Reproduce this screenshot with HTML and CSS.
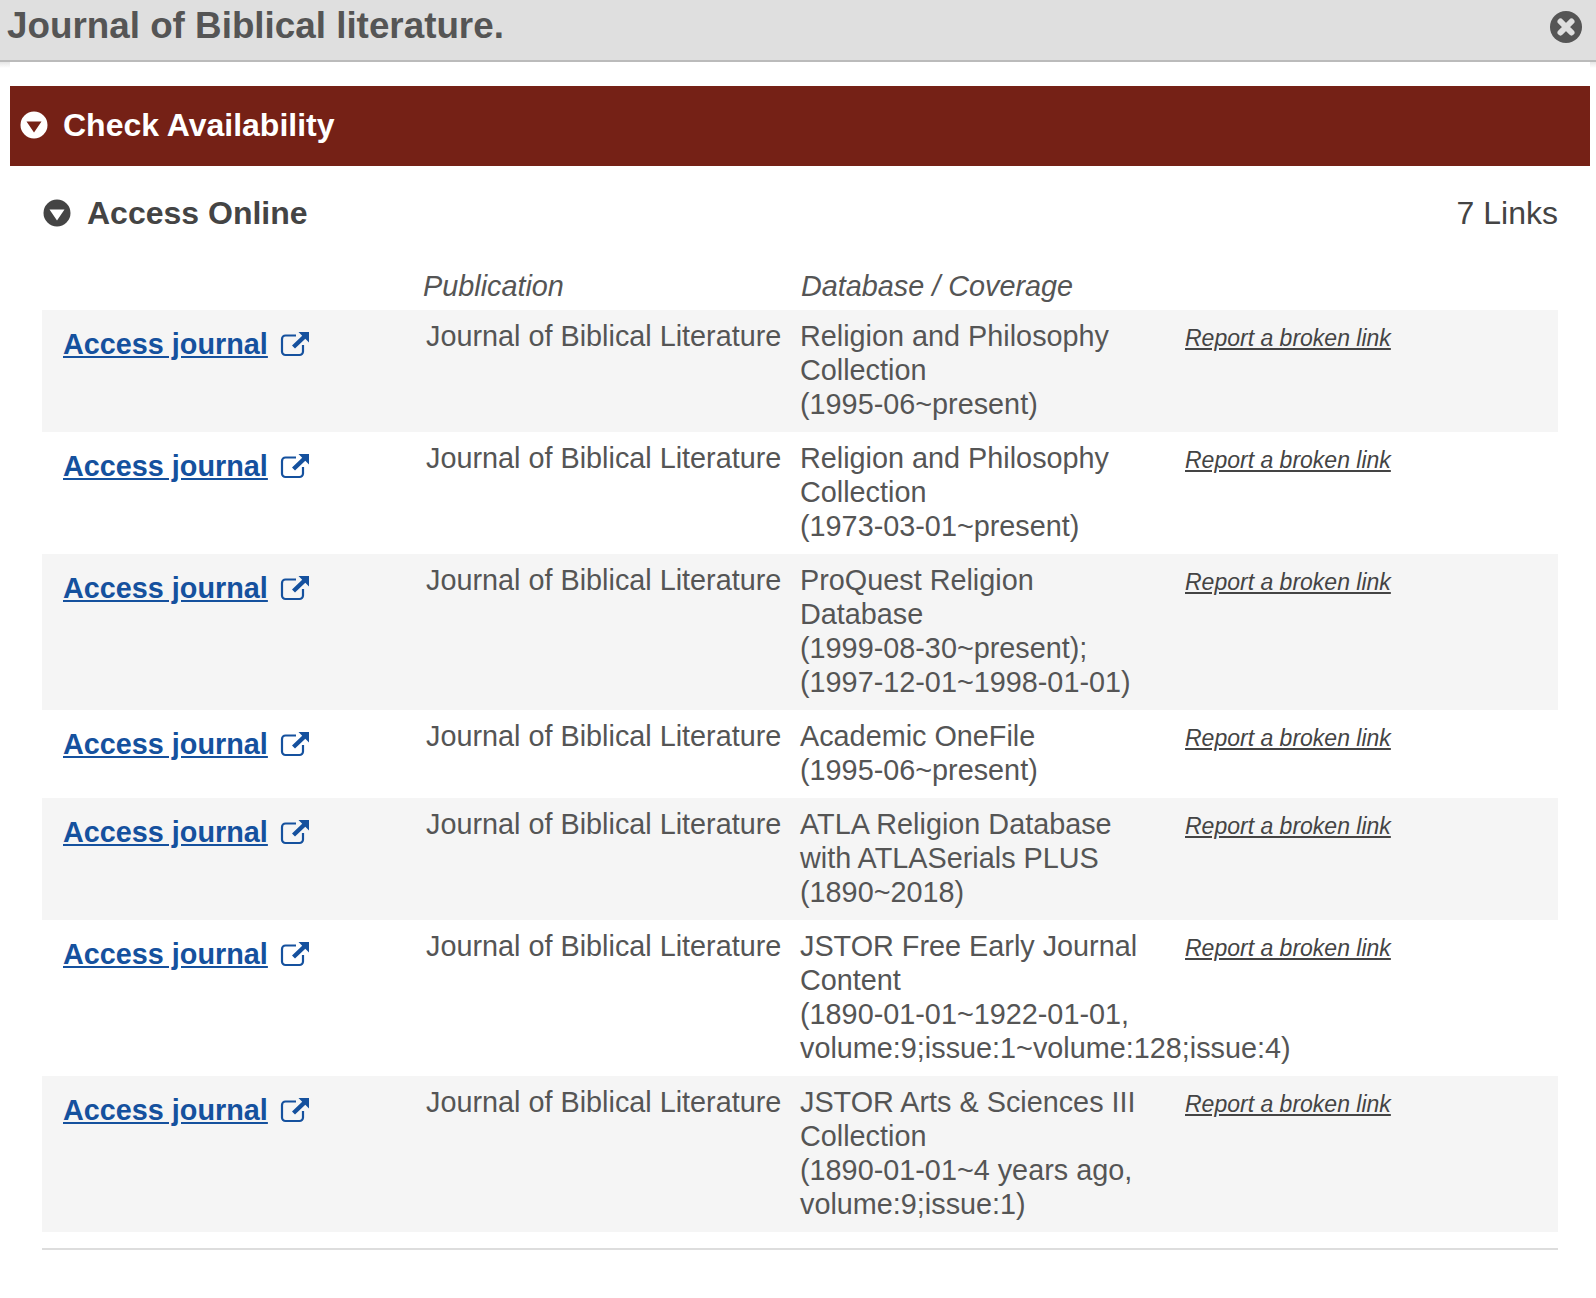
FILE: index.html
```html
<!DOCTYPE html>
<html lang="en">
<head>
<meta charset="utf-8">
<title>Journal of Biblical literature.</title>
<link rel="stylesheet" href="styles.css">
</head>
<body>
<svg class="defs" width="0" height="0" aria-hidden="true">
  <symbol id="ext" viewBox="0 0 30 26">
    <path d="M16 4.500H5.500a3.500 3.500 0 0 0-3.500 3.500V20.500a3.500 3.500 0 0 0 3.500 3.500H19.500a3.500 3.500 0 0 0 3.500-3.500V14" fill="none" stroke="currentColor" stroke-width="2.200"/>
    <path d="M18.500 1H29V11.500L25.300 7.800 15 17.500 12 14.500 22.200 4.700Z" fill="currentColor"/>
  </symbol>
  <symbol id="down" viewBox="0 0 28 28">
    <path fill-rule="evenodd" d="M14 .5a13.500 13.500 0 1 0 0 27 13.500 13.500 0 0 0 0-27ZM6.500 10.500H21.500L14 21.500Z" fill="currentColor"/>
  </symbol>
</svg>
<header class="topbar">
  <h1 class="title">Journal of Biblical literature.</h1>
  <svg class="close" viewBox="0 0 32 32" aria-label="Close">
    <circle cx="16" cy="16" r="16" fill="#555"/>
    <path d="M10.500 10.500 21.500 21.500M21.500 10.500 10.500 21.500" stroke="#dfdfdf" stroke-width="6" stroke-linecap="round"/>
  </svg>
</header>
<div class="shade"></div>
<main class="panel">
  <div class="avail"><svg class="chev"><use href="#down"/></svg><span>Check Availability</span></div>
  <section class="online">
    <div class="online-head">
      <h2 class="online-title"><svg class="chev"><use href="#down"/></svg>Access Online</h2>
      <span class="count">7 Links</span>
    </div>
    <div class="row heads">
      <span></span>
      <span class="hd hd-pub">Publication</span>
      <span class="hd hd-db">Database / Coverage</span>
    </div>

    <div class="row item">
      <div class="link-cell"><a class="access" href="#">Access journal</a><svg class="ext"><use href="#ext"/></svg></div>
      <div class="pub">Journal of Biblical Literature</div>
      <div class="db">Religion and Philosophy Collection<br>(1995-06~present)</div>
      <div class="report-cell"><a class="report" href="#">Report a broken link</a></div>
    </div>
    <div class="row item">
      <div class="link-cell"><a class="access" href="#">Access journal</a><svg class="ext"><use href="#ext"/></svg></div>
      <div class="pub">Journal of Biblical Literature</div>
      <div class="db">Religion and Philosophy Collection<br>(1973-03-01~present)</div>
      <div class="report-cell"><a class="report" href="#">Report a broken link</a></div>
    </div>
    <div class="row item">
      <div class="link-cell"><a class="access" href="#">Access journal</a><svg class="ext"><use href="#ext"/></svg></div>
      <div class="pub">Journal of Biblical Literature</div>
      <div class="db">ProQuest Religion Database<br>(1999-08-30~present);<br>(1997-12-01~1998-01-01)</div>
      <div class="report-cell"><a class="report" href="#">Report a broken link</a></div>
    </div>
    <div class="row item">
      <div class="link-cell"><a class="access" href="#">Access journal</a><svg class="ext"><use href="#ext"/></svg></div>
      <div class="pub">Journal of Biblical Literature</div>
      <div class="db">Academic OneFile<br>(1995-06~present)</div>
      <div class="report-cell"><a class="report" href="#">Report a broken link</a></div>
    </div>
    <div class="row item">
      <div class="link-cell"><a class="access" href="#">Access journal</a><svg class="ext"><use href="#ext"/></svg></div>
      <div class="pub">Journal of Biblical Literature</div>
      <div class="db">ATLA Religion Database with ATLASerials PLUS<br>(1890~2018)</div>
      <div class="report-cell"><a class="report" href="#">Report a broken link</a></div>
    </div>
    <div class="row item">
      <div class="link-cell"><a class="access" href="#">Access journal</a><svg class="ext"><use href="#ext"/></svg></div>
      <div class="pub">Journal of Biblical Literature</div>
      <div class="db">JSTOR Free Early Journal Content<br>(1890-01-01~1922-01-01, volume:9;issue:1~volume:128;issue:4)</div>
      <div class="report-cell"><a class="report" href="#">Report a broken link</a></div>
    </div>
    <div class="row item">
      <div class="link-cell"><a class="access" href="#">Access journal</a><svg class="ext"><use href="#ext"/></svg></div>
      <div class="pub">Journal of Biblical Literature</div>
      <div class="db">JSTOR Arts &amp; Sciences III Collection<br>(1890-01-01~4 years ago, volume:9;issue:1)</div>
      <div class="report-cell"><a class="report" href="#">Report a broken link</a></div>
    </div>
    <hr class="rule">
  </section>
</main>
</body>
</html>
```
FILE: styles.css
```css
* { box-sizing: border-box; }
html, body { margin: 0; padding: 0; background: #fff; }
body {
  font-family: "Liberation Sans", Arial, sans-serif;
  color: #555;
  overflow: hidden;
  height: 1298px;
}
.defs { display: block; height: 0; }
.topbar {
  height: 62px;
  background: #dfdfdf;
  border-bottom: 2px solid #bbb;
  display: flex;
  align-items: center;
  justify-content: space-between;
  padding: 0 14px 6px 7px;
}
.title { margin: 0 0 2px; font-size: 36.8px; font-weight: 700; color: #555; line-height: 50px; }
.close { width: 32px; height: 32px; display: block; }
.shade {
  height: 6px;
  background: linear-gradient(#e6e6e6, #fff);
  margin-bottom: -6px;
}
.panel { position: relative; background: #fff; margin: 0 6px 0 10px; padding-top: 24px; }
.avail {
  height: 80px;
  background: #752116;
  color: #fff;
  font-size: 32px;
  font-weight: 700;
  display: flex;
  align-items: center;
  gap: 15px;
  padding: 0 0 2px 10px;
}
.chev { width: 28px; height: 28px; display: block; flex: none; }
.avail .chev { color: #fff; }
.online { padding: 0 32px; }
.online-head {
  display: flex;
  align-items: center;
  justify-content: space-between;
  height: 94px;
}
.online-title {
  margin: 0;
  display: flex;
  align-items: center;
  gap: 16px;
  font-size: 32px;
  font-weight: 700;
  color: #444;
}
.online-title .chev { color: #444; margin-left: 1px; }
.count { font-size: 32px; color: #444; }
.row {
  display: grid;
  grid-template-columns: 370px 388px 385px 1fr;
  font-size: 28.8px;
  line-height: 34px;
}
.heads { height: 50px; align-items: start; }
.hd { font-style: italic; color: #555; padding-top: 9px; }
.hd-pub { margin-left: 11px; }
.hd-db { margin-left: 1px; }
.item { padding: 9px 0 11px; background: #fff; }
.item:nth-child(odd) { background: #f5f5f5; }
.link-cell { padding-left: 21px; display: flex; align-items: flex-start; padding-top: 9px; }
.pub { padding-left: 14px; white-space: nowrap; }
.db { padding-right: 30px; }
.access {
  color: #15519e;
  font-size: 28.8px;
  font-weight: 700;
  line-height: 32px;
  text-decoration: underline;
}
.ext { width: 30px; height: 26px; margin: 3px 0 0 12px; color: #15519e; flex: none; }
.report {
  font-size: 23px;
  font-style: italic;
  color: #444;
  line-height: 34px;
  text-decoration: underline;
  white-space: nowrap;
}
.rule { border: 0; border-top: 2px solid #ddd; margin: 16px 0 0; }
```
